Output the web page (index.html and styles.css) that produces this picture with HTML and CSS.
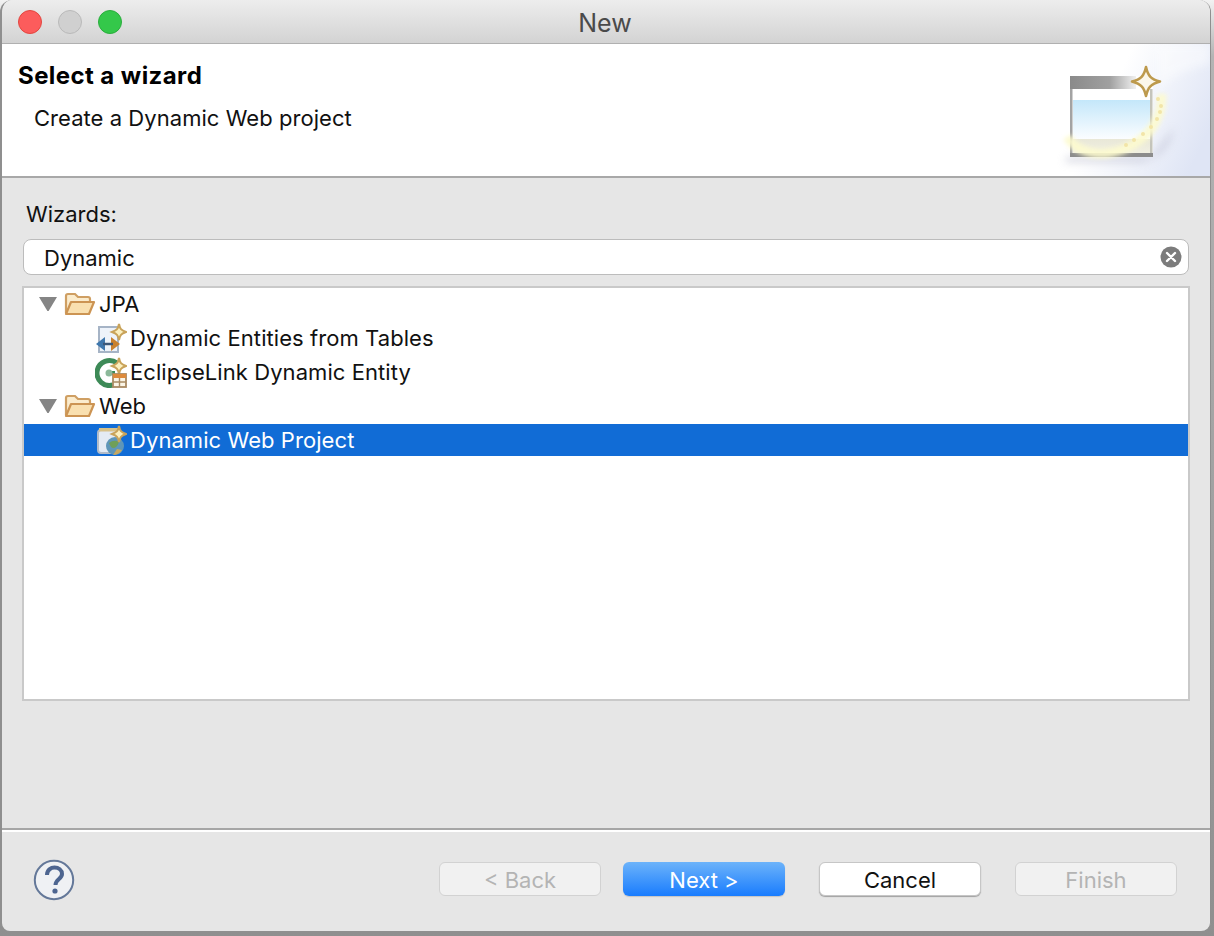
FILE: index.html
```html
<!DOCTYPE html>
<html lang="en">
<head>
<meta charset="utf-8">
<title>New</title>
<link rel="stylesheet" href="styles.css">
</head>
<body>
<div class="window">
  <div class="titlebar">
    <div class="lights">
      <span class="light red"></span>
      <span class="light grey"></span>
      <span class="light green"></span>
    </div>
    <div class="title">New</div>
  </div>
  <div class="banner">
    <div class="banner-text">
      <div class="banner-title">Select a wizard</div>
      <div class="banner-sub">Create a Dynamic Web project</div>
    </div>
    <svg class="banner-art" width="170" height="132" viewBox="0 0 170 132">
      <defs>
        <linearGradient id="wash" gradientUnits="userSpaceOnUse" x1="70" y1="50" x2="165" y2="95">
          <stop offset="0" stop-color="#ffffff"/>
          <stop offset="1" stop-color="#dfe5f5"/>
        </linearGradient>
        <linearGradient id="bar" x1="0" y1="0" x2="1" y2="0">
          <stop offset="0" stop-color="#8a8a8a"/>
          <stop offset="0.6" stop-color="#a0a0a0"/>
          <stop offset="1" stop-color="#f0f0f0"/>
        </linearGradient>
        <linearGradient id="pane" x1="0" y1="0" x2="0" y2="1">
          <stop offset="0" stop-color="#c4e7fa"/>
          <stop offset="0.72" stop-color="#fbfdff"/>
          <stop offset="0.73" stop-color="#e9e8d8"/>
          <stop offset="1" stop-color="#f1f0e2"/>
        </linearGradient>
        <filter id="soft" x="-20%" y="-20%" width="140%" height="140%"><feGaussianBlur stdDeviation="0.7"/></filter>
        <filter id="glow" x="-20%" y="-20%" width="140%" height="140%"><feGaussianBlur stdDeviation="2.2"/></filter>
        <filter id="softer" x="-30%" y="-30%" width="160%" height="160%"><feGaussianBlur stdDeviation="4"/></filter>
      </defs>
      <rect width="170" height="132" fill="url(#wash)"/>
      <path d="M118 0C138 0 156 0 170 0V20C150 24 134 30 118 44Z" fill="#ffffff" opacity=".45" filter="url(#softer)"/>
      <path d="M28 113H112L134 84C130 100 120 116 100 118H24Z" fill="#b3b5c8" opacity=".6" filter="url(#softer)"/>
      <g filter="url(#soft)">
        <rect x="30" y="32" width="83" height="81" fill="#fbfbf8"/>
        <rect x="30" y="32" width="66" height="13" fill="url(#bar)"/>
        <rect x="96" y="32" width="17" height="13" fill="#ffffff"/>
        <rect x="32" y="45" width="79" height="11" fill="#ffffff"/>
        <rect x="33" y="56" width="78" height="54" fill="url(#pane)"/>
        <rect x="30" y="45" width="2.5" height="66" fill="#a3a3a3"/>
        <rect x="110" y="45" width="2.5" height="66" fill="#c4c4bb"/>
        <rect x="30" y="109" width="83" height="4" fill="#8c8c8c"/>
      </g>
      <path d="M27 93C38 110 62 114 84 105C108 95 122 78 122 50" fill="none" stroke="#fdfbcf" stroke-width="9" opacity=".9" filter="url(#glow)"/>
      <g fill="#f2e5a8" filter="url(#soft)">
        <circle cx="118" cy="55" r="2"/><circle cx="121" cy="62" r="2"/><circle cx="120" cy="68" r="2"/><circle cx="117" cy="75" r="2"/>
        <circle cx="111" cy="83" r="2"/><circle cx="103" cy="90" r="2"/><circle cx="94" cy="96" r="2"/><circle cx="86" cy="101" r="2"/>
      </g>
      <path d="M106 23C108 32 111 35.500 120 37.500C111 40 108 43 106 52C104 43 101 40 92 37.500C101 35.500 104 32 106 23Z" fill="#fbf7ea" stroke="#bd9a4e" stroke-width="2.6" stroke-linejoin="round" filter="url(#soft)"/>
    </svg>
  </div>
  <div class="main">
    <div class="label">Wizards:</div>
    <div class="search">
      <span class="search-text">Dynamic</span>
      <svg class="clear" width="22" height="22" viewBox="0 0 22 22">
        <circle cx="11" cy="11" r="10.500" fill="#7c7c7c"/>
        <path d="M7 7L15 15M15 7L7 15" stroke="#fff" stroke-width="2.400" stroke-linecap="round"/>
      </svg>
    </div>
    <div class="tree">
      <div class="row">
        <svg class="twisty" width="18" height="14" viewBox="0 0 18 14"><path d="M0 0H18L9 15Z" fill="#858585"/></svg>
        <svg class="folder" width="32" height="24" viewBox="0 0 32 24">
          <path d="M2 21V4Q2 2 4 2H11L14 5H24Q26 5 26 7V9" fill="#fbeccd" stroke="#cf9f63" stroke-width="2.200"/>
          <path d="M2 22L7 10H30L25 22Z" fill="#f9e0b0" stroke="#cc9453" stroke-width="2.200" stroke-linejoin="round"/>
        </svg>
        <span>JPA</span>
      </div>
      <div class="row child">
        <svg class="item-icon" width="32" height="32" viewBox="0 0 32 32">
          <rect x="4" y="5" width="19" height="25" fill="#eef3fa" stroke="#a6b4c6" stroke-width="2"/>
          <path d="M1 22L10 15V29Z" fill="#3f77ad"/>
          <path d="M25 22L16 15V29Z" fill="#c9812f"/>
          <path d="M8 22H18" stroke="#3d5878" stroke-width="2.500"/>
          <path d="M24 2C25 7 26 8 31 10C26 12 25 13 24 18C23 13 22 12 17 10C22 8 23 7 24 2Z" fill="#fbf0c0" stroke="#c9a35a" stroke-width="2"/>
        </svg>
        <span>Dynamic Entities from Tables</span>
      </div>
      <div class="row child">
        <svg class="item-icon" width="32" height="32" viewBox="0 0 32 32">
          <path d="M22 7A12.500 12.500 0 1 0 18 29" fill="none" stroke="#3d8a57" stroke-width="5"/>
          <path d="M12 17H20" stroke="#3d8a57" stroke-width="4"/>
          <circle cx="14" cy="17" r="3.500" fill="#8cb99a"/>
          <path d="M24 2C25 7 26 8 31 10C26 12 25 13 24 18C23 13 22 12 17 10C22 8 23 7 24 2Z" fill="#fbf0c0" stroke="#c9a35a" stroke-width="2"/>
          <rect x="18" y="18" width="13" height="13" fill="#fbf5e6" stroke="#a98a63" stroke-width="1.800"/>
          <rect x="18" y="18" width="13" height="4" fill="#dd8a3b"/>
          <path d="M24.500 22V31M18 26H31" stroke="#a98a63" stroke-width="1.400"/>
        </svg>
        <span>EclipseLink Dynamic Entity</span>
      </div>
      <div class="row">
        <svg class="twisty" width="18" height="14" viewBox="0 0 18 14"><path d="M0 0H18L9 15Z" fill="#858585"/></svg>
        <svg class="folder" width="32" height="24" viewBox="0 0 32 24">
          <path d="M2 21V4Q2 2 4 2H11L14 5H24Q26 5 26 7V9" fill="#fbeccd" stroke="#cf9f63" stroke-width="2.200"/>
          <path d="M2 22L7 10H30L25 22Z" fill="#f9e0b0" stroke="#cc9453" stroke-width="2.200" stroke-linejoin="round"/>
        </svg>
        <span>Web</span>
      </div>
      <div class="row child selected">
        <svg class="item-icon" width="32" height="32" viewBox="0 0 32 32">
          <rect x="3" y="6" width="22" height="23" rx="3" fill="#e4ebf4" stroke="#b3bcc8" stroke-width="2"/>
          <rect x="4" y="4" width="20" height="3.500" fill="#d8c289"/>
          <circle cx="20" cy="22" r="9" fill="#5f96b8"/>
          <path d="M14 19Q19 15 24 18Q22 24 18 24Q16 24 14 19Z" fill="#6f9f58"/>
          <path d="M18 31Q24 31 27 26L22 25Z" fill="#c7a85f"/>
          <path d="M24 2C25 7 26 8 31 10C26 12 25 13 24 18C23 13 22 12 17 10C22 8 23 7 24 2Z" fill="#fbf0c0" stroke="#c9a35a" stroke-width="2"/>
        </svg>
        <span>Dynamic Web Project</span>
      </div>
    </div>
  </div>
  <div class="footer">
    <svg class="help" width="42" height="42" viewBox="0 0 42 42">
      <circle cx="21" cy="21" r="19.200" fill="#eff1f4" stroke="#647899" stroke-width="2"/>
      <path d="M14 16C14 11 18 8.500 21.500 8.500C25.500 8.500 29 11 29 15C29 20 22.500 20 22.500 26" fill="none" stroke="#4d6590" stroke-width="4"/>
      <circle cx="22" cy="32" r="2.600" fill="#4d6590"/>
    </svg>
    <div class="buttons">
      <div class="btn disabled">&lt; Back</div>
      <div class="btn primary">Next &gt;</div>
      <div class="btn cancel">Cancel</div>
      <div class="btn disabled finish">Finish</div>
    </div>
  </div>
</div>
</body>
</html>
```
FILE: styles.css
```css
* { box-sizing: border-box; }
html, body { margin: 0; padding: 0; }
body {
  width: 1214px;
  height: 936px;
  overflow: hidden;
  background: linear-gradient(#f2f2f2, #b4b4b4 6%, #8f8f8f);
  font-family: Inter, "Liberation Sans", sans-serif;
  font-size: 22px;
  color: #111;
}
.window {
  width: 1211px;
  height: 933px;
  display: flex;
  flex-direction: column;
  background: #e6e6e6;
  border: solid #8f8f8f;
  border-width: 0 1px 2px 2px;
  border-radius: 12px 12px 10px 10px;
  overflow: hidden;
}
.titlebar {
  height: 44px;
  flex: none;
  display: flex;
  align-items: center;
  position: relative;
  background: linear-gradient(#ededed, #d3d3d3);
  border-bottom: 1px solid #b0b0b0;
}
.lights { display: flex; gap: 16px; padding: 0 0 0 16px; }
.light { width: 24px; height: 24px; border-radius: 50%; border: 1px solid; }
.red { background: #fc5c5c; border-color: #e2463f; }
.grey { background: #d0d0d0; border-color: #b9b9b9; }
.green { background: #34c84a; border-color: #2aad3d; }
.title {
  position: absolute;
  left: 0;
  right: 2px;
  top: 8px;
  text-align: center;
  font-size: 25px;
  color: #4a4a4a;
}
.banner {
  height: 134px;
  flex: none;
  display: flex;
  justify-content: space-between;
  background: #fff;
  border-bottom: 2px solid #a8a8a8;
}
.banner-title { font-weight: 700; font-size: 24px; letter-spacing: 0.42px; padding: 17px 0 0 16px; line-height: 30px; color: #000; }
.banner-sub { padding: 12px 0 0 32px; line-height: 30px; letter-spacing: 0.05px; }
.banner-art { flex: none; display: block; }
.main { flex: 1; display: flex; flex-direction: column; padding: 22px 21px 0 21px; }
.label { line-height: 28px; padding-left: 3px; height: 39px; }
.search {
  height: 36px;
  display: flex;
  align-items: center;
  justify-content: space-between;
  padding: 0 6px 0 20px;
  background: #fff;
  border: 1px solid #bcbcbc;
  border-radius: 8px;
}
.search-text { padding-top: 2px; }
.clear { display: block; }
.tree {
  margin: 11px -1px 0;
  height: 415px;
  background: #fff;
  border: 2px solid #c9c9c9;
}
.row {
  height: 34px;
  display: flex;
  align-items: center;
  padding: 0 0 3px 15px;
  white-space: nowrap;
  letter-spacing: 0.07px;
}
.twisty { flex: none; margin-right: 7px; }
.folder { flex: none; margin-right: 3px; filter: blur(0.3px); }
.child { padding-left: 71px; }
.item-icon { flex: none; margin-right: 3px; filter: blur(0.4px); }
.selected { background: #116cd6; color: #fff; height: 32px; padding-bottom: 0; }
.footer {
  flex: none;
  height: 103px;
  display: flex;
  align-items: flex-start;
  justify-content: space-between;
  border-top: 2px solid #a6a6a6;
  box-shadow: inset 0 2px 0 #fff;
  padding: 30px 33px 0 31px;
}
.help { display: block; margin-top: -1px; filter: blur(0.3px); }
.buttons { display: flex; gap: 22px; padding-top: 2px; }
.btn {
  width: 162px;
  height: 34px;
  border-radius: 6px;
  text-align: center;
  line-height: 36px;
}
.disabled { background: #f1f1f1; border: 1px solid #d2d2d2; color: #b4b4b4; line-height: 34px; }
.primary { background: linear-gradient(#6cb3fa, #197cfe); color: #fff; box-shadow: 0 1px 1px #c4c4c4; }
.cancel { background: #fff; box-shadow: 0 1px 1px #a0a0a0; border: 1px solid #c6c6c6; line-height: 34px; margin-left: 12px; }
.finish { margin-left: 12px; }
```
